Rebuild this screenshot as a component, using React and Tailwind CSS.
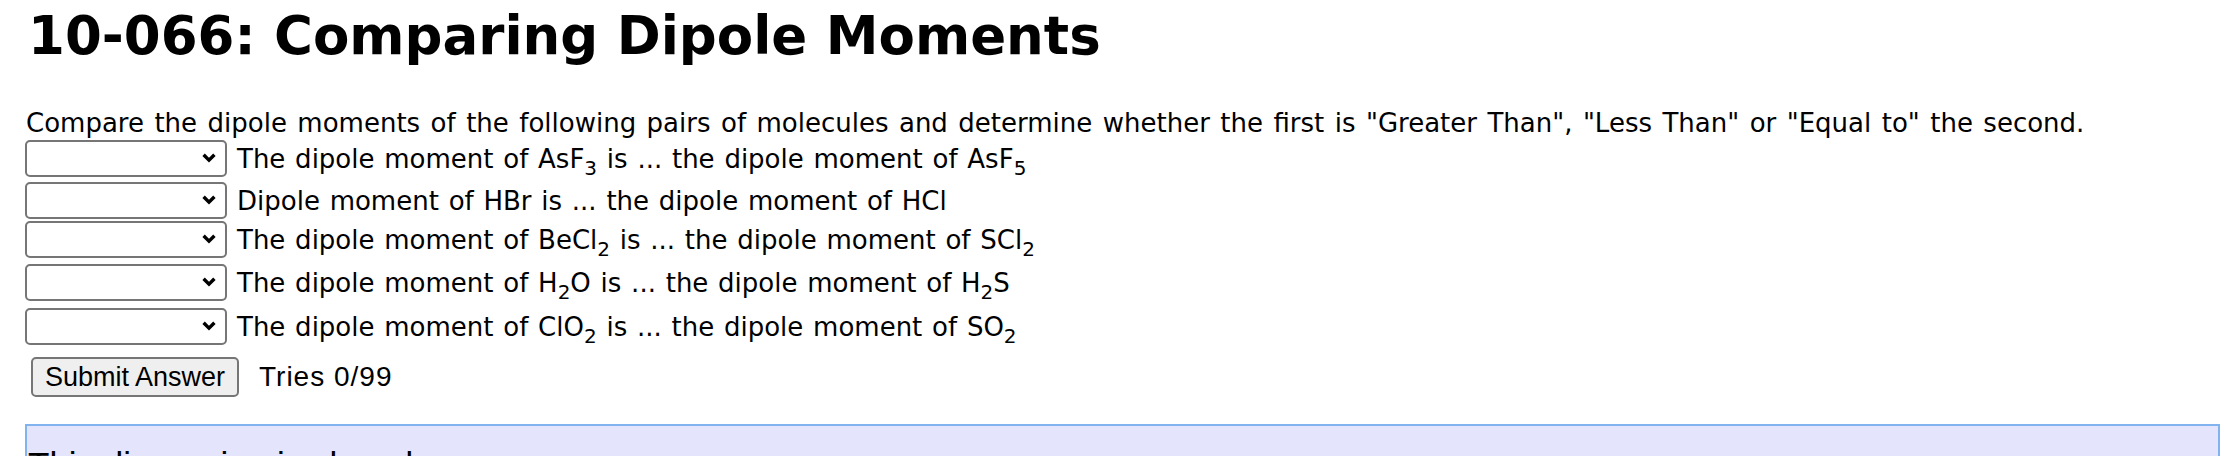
import React from "react";

function Chevron() {
  return (
    <svg width="14" height="10" viewBox="0 0 14 10" className="block">
      <path d="M1.6 1.8 L7 7.2 L12.4 1.8" fill="none" stroke="#000" strokeWidth="3.4" strokeLinejoin="miter" />
    </svg>
  );
}

function Select() {
  return (
    <div className="relative w-[202px] h-[37px] shrink-0">
      <select className="appearance-none w-full h-full bg-white border-2 border-[#767676] rounded-[5px] outline-none" defaultValue="">
        <option value=""></option>
        <option>Greater Than</option>
        <option>Less Than</option>
        <option>Equal to</option>
      </select>
      <span className="pointer-events-none absolute right-[11px] top-[13px]">
        <Chevron />
      </span>
    </div>
  );
}

function Sub({ children }) {
  return <sub className="text-[20px] bottom-[-7px]">{children}</sub>;
}

function Row({ className, children }) {
  return (
    <div className={"flex items-center ml-[25px] " + className}>
      <Select />
      <span className="ml-[10px] text-[26px] leading-[30px] [word-spacing:1.5px] whitespace-nowrap">{children}</span>
    </div>
  );
}

export default function App() {
  return (
    <div className="w-[2220px] h-[456px] overflow-hidden bg-white text-black font-['DejaVu_Sans',Verdana,sans-serif]">
      <h1 className="mt-[8px] ml-[28px] text-[53px] leading-[56px] font-bold whitespace-nowrap">
        10-066: Comparing Dipole Moments
      </h1>
      <p className="mt-[44px] ml-[26px] text-[26px] leading-[30px] [word-spacing:2.2px] whitespace-nowrap">
        Compare the dipole moments of the following pairs of molecules and determine whether the first is "Greater Than", "Less Than" or "Equal to" the second.
      </p>
      <Row className="mt-[2px]">
        The dipole moment of AsF<Sub>3</Sub> is ... the dipole moment of AsF<Sub>5</Sub>
      </Row>
      <Row className="mt-[5px]">Dipole moment of HBr is ... the dipole moment of HCl</Row>
      <Row className="mt-[2px]">
        The dipole moment of BeCl<Sub>2</Sub> is ... the dipole moment of SCl<Sub>2</Sub>
      </Row>
      <Row className="mt-[6px]">
        The dipole moment of H<Sub>2</Sub>O is ... the dipole moment of H<Sub>2</Sub>S
      </Row>
      <Row className="mt-[7px]">
        The dipole moment of ClO<Sub>2</Sub> is ... the dipole moment of SO<Sub>2</Sub>
      </Row>
      <div className="mt-[12px] ml-[31px] flex items-center font-['Liberation_Sans',Arial,sans-serif]">
        <button className="w-[208px] h-[40px] bg-[#efefef] border-2 border-[#767676] rounded-[5px] text-[27px] leading-none text-black">
          Submit Answer
        </button>
        <span className="ml-[20px] text-[28px] leading-none tracking-[1px]">Tries 0/99</span>
      </div>
      <div className="mt-[27px] ml-[25px] border-2 border-[#80b3ef] bg-[#e4e4fc] pt-[13px] pl-[1px] pb-[20px] font-['Liberation_Sans',Arial,sans-serif]">
        <div className="text-[35px] leading-normal">This discussion is closed</div>
      </div>
    </div>
  );
}
